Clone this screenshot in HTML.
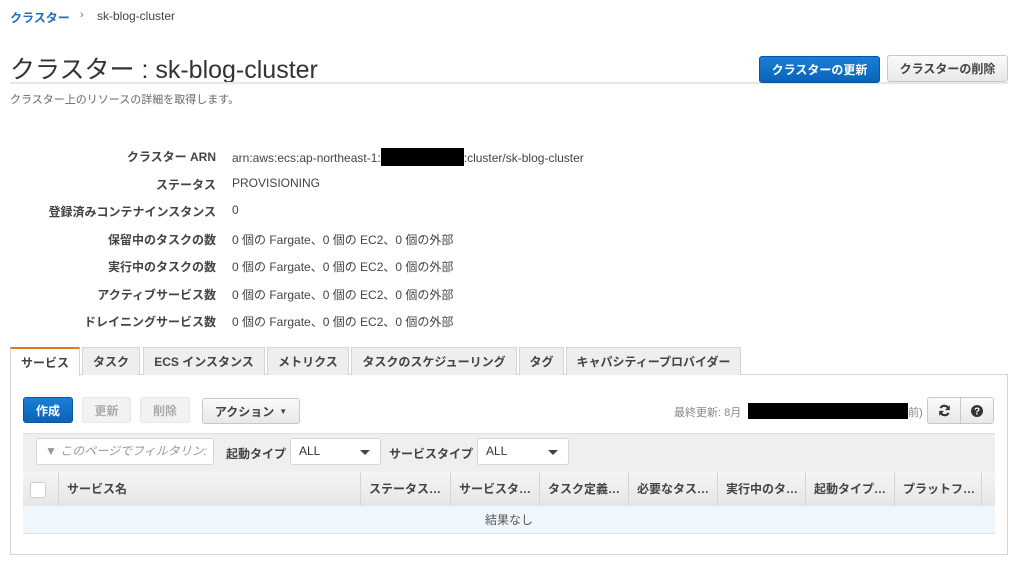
<!DOCTYPE html>
<html><head><meta charset="utf-8"><style>
*{box-sizing:border-box;margin:0;padding:0}
body{width:1024px;height:571px;background:#fff;font-family:"Liberation Sans","Noto Sans CJK JP",sans-serif;color:#444;position:relative;overflow:hidden;font-size:12px}
.a{position:absolute;white-space:nowrap}
.btn{position:absolute;border-radius:3px;font-weight:bold;font-size:12px;display:flex;align-items:center;justify-content:center}
.blue{background:linear-gradient(#1a7fd6,#0a62b8);border:1px solid #0a55a0;color:#fff}
.grey{background:linear-gradient(#fafafa,#e8e8e8);border:1px solid #c8c8c8;color:#444}
.dis{background:#f2f2f2;border:1px solid #e6e6e6;color:#aaa}
.lbl{position:absolute;right:808px;font-weight:bold;color:#444;white-space:nowrap}
.val{position:absolute;left:232px;color:#444;white-space:nowrap}
.tab{position:absolute;top:347px;height:28px;background:#eee;border:1px solid #d5d5d5;border-bottom:none;font-weight:bold;font-size:12px;display:flex;align-items:center;justify-content:center;color:#444}
.col{position:absolute;top:472px;height:34px;border-left:1px solid #d5d5d5;font-weight:bold;font-size:12px;padding-left:8px;line-height:34px;color:#444}
.sel{position:absolute;top:438px;height:27px;background:#fff;border:1px solid #d5d5d5;border-radius:3px;padding-left:8px;line-height:25px;font-size:12px;color:#333}
.sel:after{content:"";position:absolute;right:10px;top:11px;border-left:5px solid transparent;border-right:5px solid transparent;border-top:5px solid #444}
</style></head><body>
<div class="a" style="left:10px;top:9px;color:#1f6fc0;font-weight:bold;font-size:12px">クラスター</div>
<div class="a" style="left:80px;top:9px;color:#777;font-size:11px">›</div>
<div class="a" style="left:97px;top:9px;color:#444;font-size:12px">sk-blog-cluster</div>
<div class="a" style="left:10px;top:50px;font-size:25px;color:#333">クラスター : sk-blog-cluster</div>
<div class="a" style="left:10px;top:82px;width:998px;height:2px;background:#e6e6e6"></div>
<div class="a" style="left:10px;top:91px;font-size:11px;color:#666">クラスター上のリソースの詳細を取得します。</div>
<div class="btn blue" style="left:759px;top:56px;width:121px;height:27px">クラスターの更新</div>
<div class="btn grey" style="left:887px;top:55px;width:121px;height:27px">クラスターの削除</div>

<div class="lbl" style="top:148px">クラスター ARN</div><div class="val" style="top:148px">arn:aws:ecs:ap-northeast-1:<span style="display:inline-block;width:83px;height:18px;background:#000;vertical-align:-4px"></span>:cluster/sk-blog-cluster</div>
<div class="lbl" style="top:176px">ステータス</div><div class="val" style="top:176px">PROVISIONING</div>
<div class="lbl" style="top:203px">登録済みコンテナインスタンス</div><div class="val" style="top:203px">0</div>
<div class="lbl" style="top:231px">保留中のタスクの数</div><div class="val" style="top:231px">0 個の Fargate、0 個の EC2、0 個の外部</div>
<div class="lbl" style="top:258px">実行中のタスクの数</div><div class="val" style="top:258px">0 個の Fargate、0 個の EC2、0 個の外部</div>
<div class="lbl" style="top:286px">アクティブサービス数</div><div class="val" style="top:286px">0 個の Fargate、0 個の EC2、0 個の外部</div>
<div class="lbl" style="top:313px">ドレイニングサービス数</div><div class="val" style="top:313px">0 個の Fargate、0 個の EC2、0 個の外部</div>

<div class="a" style="left:10px;top:374px;width:998px;height:181px;border:1px solid #d5d5d5"></div>
<div class="tab" style="left:10px;width:70px;background:#fff;border-top:2px solid #e07b1a;height:29px">サービス</div>
<div class="tab" style="left:82px;width:58px">タスク</div>
<div class="tab" style="left:143px;width:122px">ECS インスタンス</div>
<div class="tab" style="left:267px;width:82px">メトリクス</div>
<div class="tab" style="left:351px;width:166px">タスクのスケジューリング</div>
<div class="tab" style="left:519px;width:45px">タグ</div>
<div class="tab" style="left:566px;width:175px">キャパシティープロバイダー</div>

<div class="btn blue" style="left:23px;top:397px;width:50px;height:26px">作成</div>
<div class="btn dis" style="left:82px;top:397px;width:49px;height:26px">更新</div>
<div class="btn dis" style="left:140px;top:397px;width:50px;height:26px">削除</div>
<div class="btn grey" style="left:202px;top:398px;width:98px;height:26px">アクション <span style="font-size:8px;margin-left:5px">▼</span></div>
<div class="a" style="left:674px;top:404px;color:#888;font-size:11px">最終更新: 8月</div>
<div class="a" style="left:748px;top:403px;width:160px;height:16px;background:#000"></div>
<div class="a" style="left:908px;top:404px;color:#888;font-size:11px">前)</div>
<div class="btn grey" style="left:927px;top:397px;width:34px;height:27px;border-radius:3px 0 0 3px"><svg width="13" height="13" viewBox="0 0 16 16"><path d="M13 6A5.5 5.5 0 0 0 3 5M3 10a5.5 5.5 0 0 0 10 1" stroke="#333" stroke-width="2.6" fill="none"/><path d="M14.5 1.5v6h-6zM1.5 14.5v-6h6z" fill="#333"/></svg></div>
<div class="btn grey" style="left:960px;top:397px;width:34px;height:27px;border-radius:0 3px 3px 0"><svg width="12" height="12" viewBox="0 0 12 12"><circle cx="6" cy="6" r="6" fill="#333"/><text x="6" y="9.5" text-anchor="middle" font-size="10" font-weight="bold" fill="#fff" font-family="Liberation Sans">?</text></svg></div>

<div class="a" style="left:23px;top:433px;width:972px;height:39px;background:#efefef;border-top:1px solid #e0e0e0"></div>
<div class="a" style="left:36px;top:438px;width:178px;height:27px;background:#fff;border:1px solid #d5d5d5;border-radius:3px;padding-left:8px;line-height:25px;color:#999;font-style:italic;font-size:12px;overflow:hidden">▼ このページでフィルタリン:</div>
<div class="a" style="left:226px;top:445px;font-weight:bold">起動タイプ</div>
<div class="sel" style="left:290px;width:91px">ALL</div>
<div class="a" style="left:389px;top:445px;font-weight:bold">サービスタイプ</div>
<div class="sel" style="left:477px;width:92px">ALL</div>

<div class="a" style="left:23px;top:472px;width:972px;height:34px;background:linear-gradient(#f4f4f4,#e6e6e6)"></div>
<div class="a" style="left:30px;top:482px;width:16px;height:16px;background:#fff;border:1px solid #ccc;border-radius:3px"></div>
<div class="col" style="left:58px;width:302px">サービス名</div>
<div class="col" style="left:360px;width:90px">ステータス…</div>
<div class="col" style="left:450px;width:89px">サービスタ…</div>
<div class="col" style="left:539px;width:89px">タスク定義…</div>
<div class="col" style="left:628px;width:89px">必要なタス…</div>
<div class="col" style="left:717px;width:88px">実行中のタ…</div>
<div class="col" style="left:805px;width:89px">起動タイプ…</div>
<div class="col" style="left:894px;width:88px;border-right:1px solid #d5d5d5">プラットフ…</div>
<div class="a" style="left:23px;top:506px;width:972px;height:28px;background:#f0f7fc;border-bottom:1px solid #dde5ea;text-align:center;line-height:28px;color:#555">結果なし</div>
</body></html>
